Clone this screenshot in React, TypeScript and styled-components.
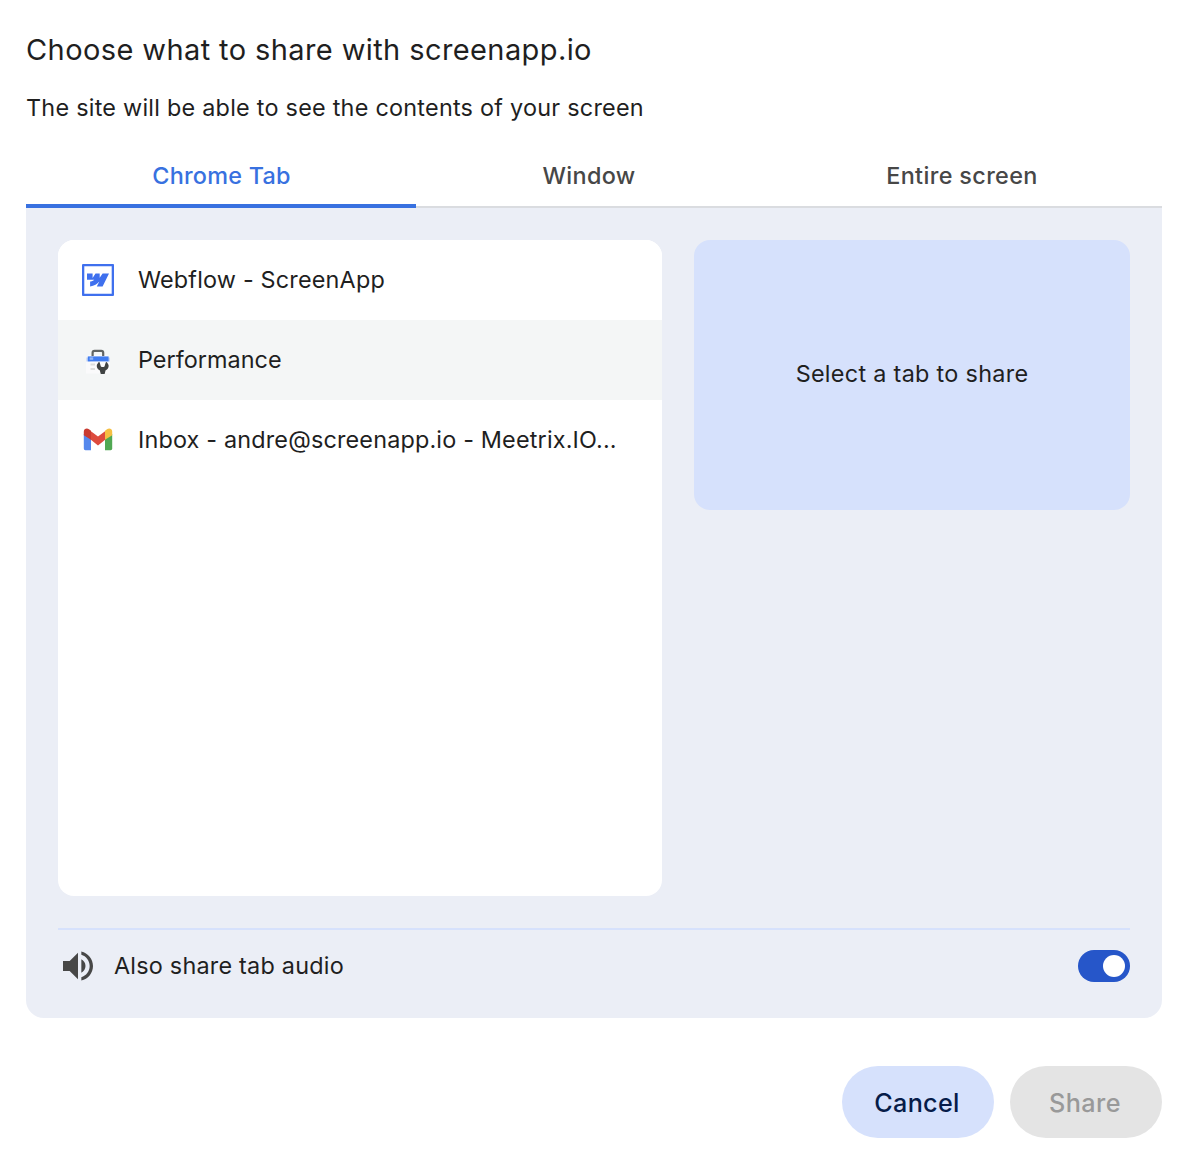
import React, { useState } from "react";
import styled, { createGlobalStyle } from "styled-components";

const GlobalStyle = createGlobalStyle`
  *, *::before, *::after { box-sizing: border-box; }
  body { margin: 0; background: #fff; }
  button { font: inherit; border: 0; padding: 0; background: none; }
`;

const Dialog = styled.main`
  width: 1184px;
  height: 1168px;
  padding: 28px 22px 30px 26px;
  display: flex;
  flex-direction: column;
  background: #fff;
  color: #1f1f1f;
  font-family: Inter, "Liberation Sans", sans-serif;
  font-size: 23.4px;
  line-height: 32px;
`;

const Text = styled.span<{ $tracking?: number }>`
  white-space: nowrap;
  letter-spacing: ${(p) => p.$tracking ?? 0}px;
`;

const Title = styled.h1`
  margin: 0;
  font-size: 29px;
  font-weight: 400;
  line-height: 44px;
`;

const Subtitle = styled.p`
  margin: 20px 0 0;
`;

const TabList = styled.div`
  margin-top: 20px;
  height: 64px;
  flex: none;
  display: grid;
  grid-template-columns: 390px 345px 401px;
`;

const Tab = styled.button<{ $active: boolean }>`
  padding-top: ${(p) => (p.$active ? 4 : 2)}px;
  padding-left: 1px;
  border-bottom: ${(p) => (p.$active ? "4px solid #3871e0" : "2px solid #dadce0")};
  color: ${(p) => (p.$active ? "#3871e0" : "#474747")};
  font-weight: 500;
`;

const Panel = styled.section`
  height: 810px;
  flex: none;
  padding: 32px;
  display: flex;
  flex-direction: column;
  border-radius: 0 0 18px 18px;
  background: #ebeef6;
`;

const Columns = styled.div`
  display: grid;
  grid-template-columns: 604px 436px;
  gap: 32px;
  height: 656px;
  flex: none;
`;

const SourceList = styled.ul`
  margin: 0;
  padding: 0;
  list-style: none;
  border-radius: 16px;
  background: #fff;
  overflow: hidden;
`;

const Source = styled.li<{ $hovered?: boolean }>`
  height: 80px;
  padding: 0 24px;
  display: flex;
  align-items: center;
  gap: 24px;
  background: ${(p) => (p.$hovered ? "#f4f6f6" : "#fff")};
`;

const Favicon = styled.svg<{ $soften: number }>`
  width: 32px;
  height: 32px;
  flex: none;
  filter: blur(${(p) => p.$soften}px);
`;

const Preview = styled.div`
  height: 270px;
  display: flex;
  align-items: center;
  justify-content: center;
  padding-bottom: 2px;
  border-radius: 16px;
  background: #d6e1fc;
`;

const AudioRow = styled.div`
  margin-top: 32px;
  height: 58px;
  flex: none;
  padding-top: 16px;
  display: flex;
  align-items: center;
  gap: 16px;
  border-top: 2px solid #d6e1fc;
`;

const Toggle = styled.button<{ $on: boolean }>`
  width: 52px;
  height: 32px;
  margin-left: auto;
  padding: 0 5px;
  display: flex;
  align-items: center;
  justify-content: ${(p) => (p.$on ? "flex-end" : "flex-start")};
  border-radius: 16px;
  background: ${(p) => (p.$on ? "#2656c9" : "#9aa0a6")};
`;

const Knob = styled.span`
  width: 22px;
  height: 22px;
  border-radius: 50%;
  background: #fff;
`;

const Actions = styled.footer`
  margin-top: 48px;
  display: flex;
  justify-content: flex-end;
  gap: 16px;
`;

const Action = styled.button<{ $primary?: boolean }>`
  width: 152px;
  height: 72px;
  padding: 2px 2px 0 0;
  border-radius: 36px;
  font-size: 25.2px;
  font-weight: 500;
  color: ${(p) => (p.$primary ? "#071c49" : "#999")};
  background: ${(p) => (p.$primary ? "#d6e1fc" : "#e4e4e4")};
`;

const WebflowIcon = () => (
  <Favicon viewBox="0 0 32 32" $soften={0.4}>
    <rect x="1" y="1" width="30" height="30" rx="1" fill="#fff" stroke="#3f70ee" strokeWidth="2.6" />
    <path
      d="M27 9.6 20.6 22.4h-5.8l2.5-4.8c-2.1 2.7-5 4.4-9.2 4.8v-4.8s2.6-.2 4.2-1.8H5V9.6h5.6v4.3l2.9-4.3h4.2v4.2l2.9-4.2z"
      fill="#3f70ee"
    />
  </Favicon>
);

const ToolboxIcon = () => (
  <Favicon viewBox="0 0 32 32" $soften={0.75}>
    <path d="M4 14.5 7 11h18l3 3.5V29.5H4z" fill="#fafafb" />
    <path d="M10.6 12V8.8q0-1.9 1.9-1.9h6.8q1.9 0 1.9 1.9V12" fill="none" stroke="#606464" strokeWidth="2.2" />
    <path d="M4.3 13.4h4v4h-4zM24.5 13.4h3.4v4h-3.4z" fill="#c5d5f7" />
    <rect x="5.8" y="12.4" width="20.8" height="5" fill="#3f7cf0" />
    <rect x="7.6" y="13.4" width="3.6" height="2.4" fill="#8fb3f7" />
    <path d="M8.5 20.5h4.5M8.5 25h4.5" stroke="#dcdddd" strokeWidth="2.2" />
    <path
      d="M17 18.8c-2.4 2.8-2 5.8 1.5 7.4l.8 3.2h2.8l.8-3.2c3.5-1.6 3.9-4.6 1.5-7.4l-1.2 4-1.4 1h-2.2l-1.4-1z"
      fill="#404343"
      stroke="#404343"
      strokeWidth="1.4"
      strokeLinejoin="round"
    />
  </Favicon>
);

const GmailIcon = () => (
  <Favicon viewBox="0 0 32 32" $soften={0.5}>
    <path d="M1.8 10 9 14v12.2H3.4q-1.6 0-1.6-1.6z" fill="#5588ed" />
    <path d="M30.2 10 23 14v12.2h5.6q1.6 0 1.6-1.6z" fill="#50a853" />
    <path d="M8.6 7 16 12.6 23.4 7v8.4L16 21.4l-7.4-6z" fill="#dd4b3e" />
    <path d="M1.8 7.8c0-3.4 3.2-4.1 5.2-2.6L9 6.8v8.9l-7.2-4.5z" fill="#c93b31" />
    <path d="M30.2 7.8c0-3.4-3.2-4.1-5.2-2.6L23 6.8v8.9l7.2-4.5z" fill="#f5bf42" />
  </Favicon>
);

const SpeakerIcon = () => (
  <svg width="40" height="40" viewBox="0 0 24 24" fill="#474747">
    <path d="M3 9v6h4l5 5V4L7 9H3zm13.5 3c0-1.77-1.02-3.29-2.5-4.03v8.05c1.48-.73 2.5-2.25 2.5-4.02zM14 3.23v2.06c2.89.86 5 3.54 5 6.71s-2.11 5.85-5 6.71v2.06c4.01-.91 7-4.49 7-8.77s-2.99-7.86-7-8.77z" />
  </svg>
);

const tabs = [
  { label: "Chrome Tab", tracking: 0.25 },
  { label: "Window", tracking: 0.35 },
  { label: "Entire screen", tracking: 0.36 },
];

const sources = [
  { label: "Webflow - ScreenApp", Icon: WebflowIcon, tracking: 0.18 },
  { label: "Performance", Icon: ToolboxIcon, hovered: true, tracking: 0.04 },
  { label: "Inbox - andre@screenapp.io - Meetrix.IO...", Icon: GmailIcon, tracking: 0.17 },
];

export default function App() {
  const [activeTab, setActiveTab] = useState(0);
  const [audio, setAudio] = useState(true);

  return (
    <>
      <GlobalStyle />
      <Dialog>
        <Title><Text $tracking={0.4}>Choose what to share with screenapp.io</Text></Title>
        <Subtitle><Text $tracking={0.245}>The site will be able to see the contents of your screen</Text></Subtitle>
        <TabList role="tablist">
          {tabs.map((tab, i) => (
            <Tab key={tab.label} role="tab" $active={i === activeTab} onClick={() => setActiveTab(i)}>
              <Text $tracking={tab.tracking}>{tab.label}</Text>
            </Tab>
          ))}
        </TabList>
        <Panel>
          <Columns>
            <SourceList>
              {sources.map(({ label, Icon, hovered, tracking }) => (
                <Source key={label} $hovered={hovered}>
                  <Icon />
                  <Text $tracking={tracking}>{label}</Text>
                </Source>
              ))}
            </SourceList>
            <Preview><Text $tracking={0.3}>Select a tab to share</Text></Preview>
          </Columns>
          <AudioRow>
            <SpeakerIcon />
            <Text $tracking={0.22}>Also share tab audio</Text>
            <Toggle $on={audio} role="switch" aria-checked={audio} onClick={() => setAudio(!audio)}>
              <Knob />
            </Toggle>
          </AudioRow>
        </Panel>
        <Actions>
          <Action $primary><Text $tracking={0.3}>Cancel</Text></Action>
          <Action disabled><Text $tracking={0.45}>Share</Text></Action>
        </Actions>
      </Dialog>
    </>
  );
}
